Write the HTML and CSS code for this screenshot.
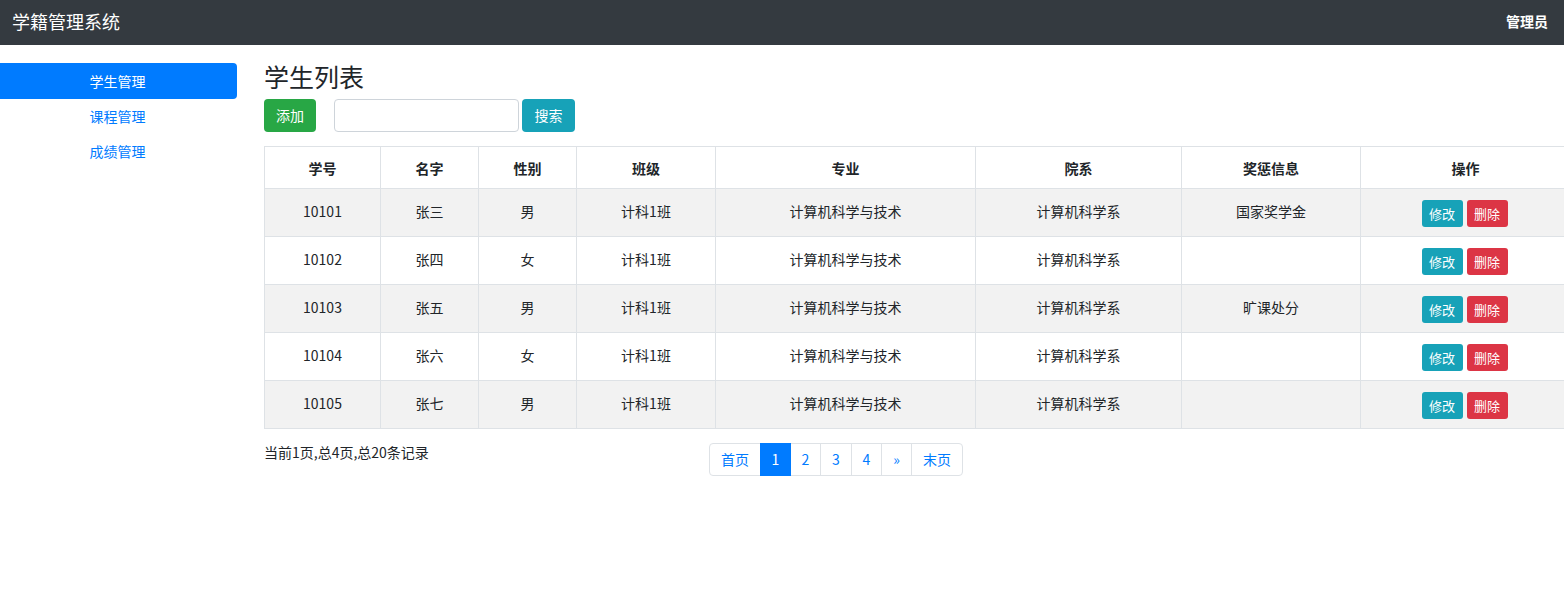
FILE: index.html
```html
<!DOCTYPE html>
<html lang="zh-CN">
<head>
<meta charset="utf-8">
<title>学籍管理系统</title>
<link rel="stylesheet" href="styles.css">
</head>
<body>
<header class="navbar">
  <div class="brand">学籍管理系统</div>
  <div class="user">管理员</div>
</header>
<div class="layout">
  <nav class="sidebar">
    <a class="nav-item active">学生管理</a>
    <a class="nav-item">课程管理</a>
    <a class="nav-item">成绩管理</a>
  </nav>
  <main class="main">
    <h3 class="title">学生列表</h3>
    <div class="toolbar">
      <button class="btn btn-success">添加</button>
      <input class="search-input" type="text">
      <button class="btn btn-info">搜索</button>
    </div>
    <table class="table">
      <colgroup>
        <col class="c1"><col class="c2"><col class="c3"><col class="c4"><col class="c5"><col class="c6"><col class="c7"><col class="c8">
      </colgroup>
      <thead>
        <tr><th>学号</th><th>名字</th><th>性别</th><th>班级</th><th>专业</th><th>院系</th><th>奖惩信息</th><th>操作</th></tr>
      </thead>
      <tbody>
        <tr><td>10101</td><td>张三</td><td>男</td><td>计科1班</td><td>计算机科学与技术</td><td>计算机科学系</td><td>国家奖学金</td><td><span class="ops"><button class="sbtn sbtn-edit">修改</button><button class="sbtn sbtn-del">删除</button></span></td></tr>
        <tr><td>10102</td><td>张四</td><td>女</td><td>计科1班</td><td>计算机科学与技术</td><td>计算机科学系</td><td></td><td><span class="ops"><button class="sbtn sbtn-edit">修改</button><button class="sbtn sbtn-del">删除</button></span></td></tr>
        <tr><td>10103</td><td>张五</td><td>男</td><td>计科1班</td><td>计算机科学与技术</td><td>计算机科学系</td><td>旷课处分</td><td><span class="ops"><button class="sbtn sbtn-edit">修改</button><button class="sbtn sbtn-del">删除</button></span></td></tr>
        <tr><td>10104</td><td>张六</td><td>女</td><td>计科1班</td><td>计算机科学与技术</td><td>计算机科学系</td><td></td><td><span class="ops"><button class="sbtn sbtn-edit">修改</button><button class="sbtn sbtn-del">删除</button></span></td></tr>
        <tr><td>10105</td><td>张七</td><td>男</td><td>计科1班</td><td>计算机科学与技术</td><td>计算机科学系</td><td></td><td><span class="ops"><button class="sbtn sbtn-edit">修改</button><button class="sbtn sbtn-del">删除</button></span></td></tr>
      </tbody>
    </table>
    <div class="footer-row">
      <div class="record-info">当前1页,总4页,总20条记录</div>
      <ul class="pagination">
        <li class="page first">首页</li>
        <li class="page num active">1</li>
        <li class="page num">2</li>
        <li class="page num wide">3</li>
        <li class="page num">4</li>
        <li class="page num">»</li>
        <li class="page last">末页</li>
      </ul>
    </div>
  </main>
</div>
</body>
</html>
```
FILE: styles.css
```css
html, body {
  margin: 0;
  padding: 0;
  overflow: hidden;
}
body {
  font-family: "Noto Sans CJK SC", "Noto Sans", sans-serif;
  font-size: 14px;
  line-height: 21px;
  color: #212529;
  background: #fff;
}
.navbar {
  height: 45px;
  background: #343a40;
  display: flex;
  align-items: center;
  justify-content: space-between;
  padding: 0 16px 0 12px;
}
.brand {
  color: #fff;
  font-size: 18px;
  line-height: 24px;
  margin-top: -4px;
}
.user {
  color: #fff;
  font-size: 14px;
  font-weight: bold;
  margin-top: -2px;
}
.layout {
  display: flex;
  padding-top: 18px;
}
.sidebar {
  width: 237px;
  flex: none;
  display: flex;
  flex-direction: column;
}
.nav-item {
  display: block;
  height: 35px;
  line-height: 35px;
  text-align: center;
  color: #007bff;
  font-size: 14px;
  padding-right: 2px;
}
.nav-item.active {
  height: 36px;
  line-height: 36px;
  background: #007bff;
  color: #fff;
  border-radius: 0 4px 4px 0;
}
.main {
  margin-left: 27px;
  flex: none;
  width: 1306px;
}
.title {
  margin: 0;
  font-size: 25px;
  font-weight: normal;
  line-height: 30px;
  height: 36px;
  margin-top: -2px;
  margin-bottom: 2px;
  color: #212529;
}
.toolbar {
  display: flex;
  align-items: center;
  height: 33px;
}
.btn {
  height: 33px;
  border: none;
  border-radius: 4px;
  color: #fff;
  font-family: inherit;
  font-size: 14px;
  padding: 0;
  line-height: 33px;
}
.btn-success {
  background: #28a745;
  width: 52px;
}
.btn-info {
  background: #17a2b8;
  width: 53px;
}
.search-input {
  margin-left: 18px;
  margin-right: 3px;
  width: 185px;
  height: 33px;
  box-sizing: border-box;
  border: 1px solid #ced4da;
  border-radius: 4px;
  padding: 0 10px;
}
.table {
  margin-top: 14px;
  width: 1306px;
  border-collapse: collapse;
  table-layout: fixed;
  border-top: 1px solid #dee2e6;
  border-bottom: 1px solid #dee2e6;
}
.c1 { width: 116px; }
.c2 { width: 98px; }
.c3 { width: 98px; }
.c4 { width: 139px; }
.c5 { width: 260px; }
.c6 { width: 206px; }
.c7 { width: 179px; }
.c8 { width: 210px; }
.table th, .table td {
  border-left: 1px solid #dee2e6;
  border-right: 1px solid #dee2e6;
  text-align: center;
  vertical-align: middle;
  padding: 0;
}
.table th {
  height: 40px;
  font-weight: bold;
  border-bottom: 1px solid #dee2e6;
  padding-top: 1px;
}
.table td {
  height: 45px;
  border-top: 1px solid #dee2e6;
  padding-bottom: 2px;
}
.table tbody tr:nth-child(odd) {
  background: #f2f2f2;
}
.ops {
  display: inline-flex;
  gap: 4px;
  margin-top: 4px;
  margin-left: -2px;
  vertical-align: middle;
}
.sbtn {
  height: 27px;
  width: 41px;
  border: none;
  border-radius: 3px;
  color: #fff;
  font-family: inherit;
  font-size: 13px;
  padding: 0;
  line-height: 27px;
}
.sbtn-edit { background: #17a2b8; }
.sbtn-del { background: #dc3545; }
.footer-row {
  display: flex;
  align-items: flex-start;
  margin-top: 14px;
}
.record-info {
  width: 445px;
  flex: none;
  margin-top: -1px;
}
.pagination {
  display: flex;
  list-style: none;
  margin: 0;
  padding: 0;
}
.page {
  height: 31px;
  line-height: 31px;
  padding: 0;
  width: 50px;
  border: 1px solid #dee2e6;
  margin-left: -1px;
  color: #007bff;
  font-size: 14px;
  text-align: center;
}
.page.num {
  width: 29px;
}
.page.num.wide {
  width: 30px;
}
.page.first {
  margin-left: 0;
  border-radius: 4px 0 0 4px;
}
.page.last {
  width: 50px;
  border-radius: 0 4px 4px 0;
}
.page.active {
  background: #007bff;
  border-color: #007bff;
  color: #fff;
  position: relative;
}
```
